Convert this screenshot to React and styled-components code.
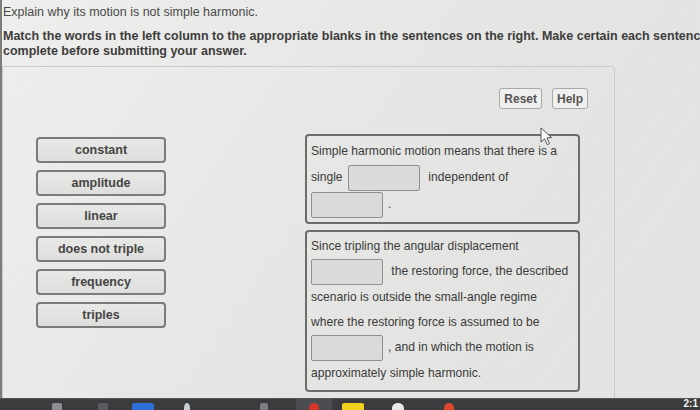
import React from "react";
import styled, { createGlobalStyle } from "styled-components";

const GlobalStyle = createGlobalStyle`
  html, body {
    margin: 0;
    padding: 0;
    background: #e6e6e4;
  }
  body {
    font-family: "Liberation Sans", Arial, sans-serif;
  }
`;

const WORDS = ["constant", "amplitude", "linear", "does not triple", "frequency", "triples"];

export default function App() {
  return (
    <>
      <GlobalStyle />
      <Screen>
        <Content>
          <Prompt>Explain why its motion is not simple harmonic.</Prompt>
          <Instructions>
            Match the words in the left column to the appropriate blanks in the sentences on the right. Make certain each sentence is
            <br />
            complete before submitting your answer.
          </Instructions>
          <Panel>
            <Toolbar>
              <ToolButton>Reset</ToolButton>
              <ToolButton>Help</ToolButton>
            </Toolbar>
            <Body>
              <WordList>
                {WORDS.map((w) => (
                  <Word key={w}>{w}</Word>
                ))}
              </WordList>
              <Sentences>
                <SentenceBox $lh={26}>
                  Simple harmonic motion means that there is a<br />
                  single <Blank /> independent of<br />
                  <Blank $first />.
                </SentenceBox>
                <SentenceBox $lh={25.2}>
                  Since tripling the angular displacement<br />
                  <Blank $first /> the restoring force, the described<br />
                  scenario is outside the small-angle regime<br />
                  where the restoring force is assumed to be<br />
                  <Blank $first />, and in which the motion is<br />
                  approximately simple harmonic.
                </SentenceBox>
              </Sentences>
            </Body>
            <Pointer width="14" height="19" viewBox="0 0 14 19">
              <path
                d="M1 1 L1 15 L4.5 11.8 L7.3 17.6 L9.6 16.6 L6.9 10.9 L11.6 10.6 Z"
                fill="#fafafa"
                stroke="#555"
                strokeWidth="1"
                strokeLinejoin="round"
              />
            </Pointer>
          </Panel>
        </Content>
        <Taskbar>
          <TrayIcon $c="#8d8f93" $w={10} $ml={52} />
          <TrayIcon $c="#5a5c60" $w={10} $ml={36} />
          <TrayIcon $c="#2d6fd6" $w={22} $ml={24} />
          <TrayIcon $c="#c9ccd0" $w={6} $ml={30} $round />
          <TrayIcon $c="#7c7e82" $w={8} $ml={70} />
          <ActiveSlot>
            <TrayIcon $c="#d8352a" $w={10} $ml={13} $round />
          </ActiveSlot>
          <TrayIcon $c="#f2d31b" $w={22} $ml={10} />
          <TrayIcon $c="#e9e9e9" $w={12} $ml={28} $round />
          <TrayIcon $c="#e0472e" $w={10} $ml={40} $round />
          <Clock>2:1</Clock>
        </Taskbar>
      </Screen>
    </>
  );
}

const Screen = styled.div`
  position: relative;
  width: 700px;
  height: 410px;
  overflow: hidden;
  display: flex;
  flex-direction: column;
  background: linear-gradient(125deg, #eeeeec 0%, #e9e9e7 30%, #e4e4e2 60%, #e3e3e1 100%);
`;

const Content = styled.div`
  flex: 1;
  display: flex;
  flex-direction: column;
  border-left: 2px solid #7c7c7c;
  min-height: 0;
`;

const Prompt = styled.div`
  padding: 5px 0 0 1px;
  font-size: 12.5px;
  line-height: 15px;
  color: #4a4a4a;
`;

const Instructions = styled.div`
  margin-top: 9px;
  padding-left: 1px;
  font-size: 12.5px;
  line-height: 15px;
  font-weight: bold;
  color: #3d3d3d;
  white-space: nowrap;
`;

const Panel = styled.div`
  position: relative;
  flex: 1;
  width: 611px;
  margin-top: 7px;
  border: 1px solid #cbcbc9;
  border-bottom: none;
  border-radius: 0 4px 0 0;
  display: flex;
  flex-direction: column;
`;

const Toolbar = styled.div`
  display: flex;
  justify-content: flex-end;
  gap: 10px;
  padding: 21px 26px 0 0;
`;

const ToolButton = styled.div`
  height: 19px;
  padding: 0 4px;
  display: flex;
  align-items: center;
  border: 1px solid #a9a9a7;
  border-radius: 3px;
  background: #efefed;
  font-size: 12px;
  font-weight: bold;
  color: #555;
`;

const Body = styled.div`
  display: flex;
  margin-top: 25px;
`;

const WordList = styled.div`
  display: flex;
  flex-direction: column;
  gap: 7px;
  width: 130px;
  margin: 3px 0 0 33px;
`;

const Word = styled.div`
  height: 22px;
  display: flex;
  align-items: center;
  justify-content: center;
  border: 2px solid #7b7b79;
  border-radius: 4px;
  background: linear-gradient(#e8e8e6, #dededc);
  font-size: 12.5px;
  font-weight: bold;
  color: #454545;
`;

const Sentences = styled.div`
  display: flex;
  flex-direction: column;
  gap: 6px;
  margin-left: 139px;
`;

const SentenceBox = styled.div`
  width: 262px;
  padding: 2px 5px 4px 4px;
  border: 2px solid #6c6c6a;
  border-radius: 4px;
  font-size: 12.1px;
  line-height: ${(p) => p.$lh}px;
  color: #3a3a3a;
  white-space: nowrap;
`;

const Blank = styled.span`
  display: inline-block;
  width: 70px;
  height: 24px;
  margin: 0 5px 0 ${(p) => (p.$first ? 0 : 2)}px;
  vertical-align: middle;
  border: 1px solid #8f8f8d;
  border-radius: 2px;
  background: #dadad8;
`;

const Pointer = styled.svg`
  position: absolute;
  left: 537px;
  top: 60px;
`;

const Taskbar = styled.div`
  position: relative;
  height: 11px;
  display: flex;
  align-items: flex-start;
  background: #3b3c3e;
  border-top: 1px solid #55565a;
`;

const TrayIcon = styled.div`
  width: ${(p) => p.$w}px;
  height: 10px;
  margin-top: 4px;
  margin-left: ${(p) => p.$ml}px;
  background: ${(p) => p.$c};
  border-radius: ${(p) => (p.$round ? "50% 50% 0 0" : "2px 2px 0 0")};
  flex-shrink: 0;
`;

const ActiveSlot = styled.div`
  display: flex;
  width: 36px;
  height: 11px;
  margin-left: 28px;
  background: #4c4d50;
`;

const Clock = styled.div`
  position: absolute;
  right: 2px;
  top: 0px;
  font-size: 10px;
  line-height: 10px;
  font-weight: bold;
  color: #f2f2f2;
`;
